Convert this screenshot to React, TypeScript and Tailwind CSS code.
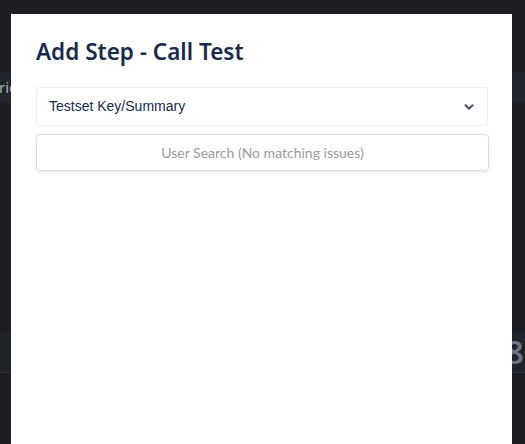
import React from 'react'

const App: React.FC = () => {
    return (
        <div className="relative w-[525px] h-[444px] overflow-hidden bg-[#1c1e23]" style={{ fontFamily: '"Noto Sans", sans-serif' }}>
            {/* background page bits behind the modal */}
            <div className="absolute left-0 top-[72px] w-[525px] h-[31px] bg-[#22252b] text-[15px] text-[#a9b0bb] leading-[31px]">
                <span className="ml-[-1px]">ric</span>
            </div>
            <div className="absolute left-0 top-[332px] w-[525px] h-[41px] bg-[#202329] border-b border-[#2c2f36]">
                <span className="absolute left-[505px] top-[0px] text-[33px] font-semibold text-[#6b7684] leading-[40px]">8</span>
            </div>

            <div className="absolute left-[11px] top-[14px] w-[501px] h-[440px] bg-white">
                <div className="flex flex-col px-[25px] pt-[22px]">
                    <h2 className="text-[22.5px] font-semibold text-[#172b4d] leading-[32px]">Add Step - Call Test</h2>
                    <div className="mt-[19px] flex items-center justify-between h-[39px] w-[452px] border border-[#f0f0f0] rounded-[3px] pl-[12px] pr-[11px]" style={{ fontFamily: '"Liberation Sans", Arial, sans-serif' }}>
                        <span className="text-[14px] text-[#172b4d]">Testset Key/Summary</span>
                        <svg width="14" height="14" viewBox="0 0 24 24" fill="none" stroke="#42526e" strokeWidth="3.5" strokeLinecap="round" strokeLinejoin="round">
                            <path d="M6 9l6 6 6-6" />
                        </svg>
                    </div>
                    <div className="mt-[8px] h-[37px] w-[453px] border border-[#dcdcdc] rounded-[4px] shadow-[0_2px_4px_rgba(0,0,0,0.08)] flex items-center justify-center" style={{ fontFamily: 'Lato, sans-serif' }}>
                        <span className="text-[14px] text-[#9a9a9a]">User Search (No matching issues)</span>
                    </div>
                </div>
            </div>
        </div>
    )
}

export default App
